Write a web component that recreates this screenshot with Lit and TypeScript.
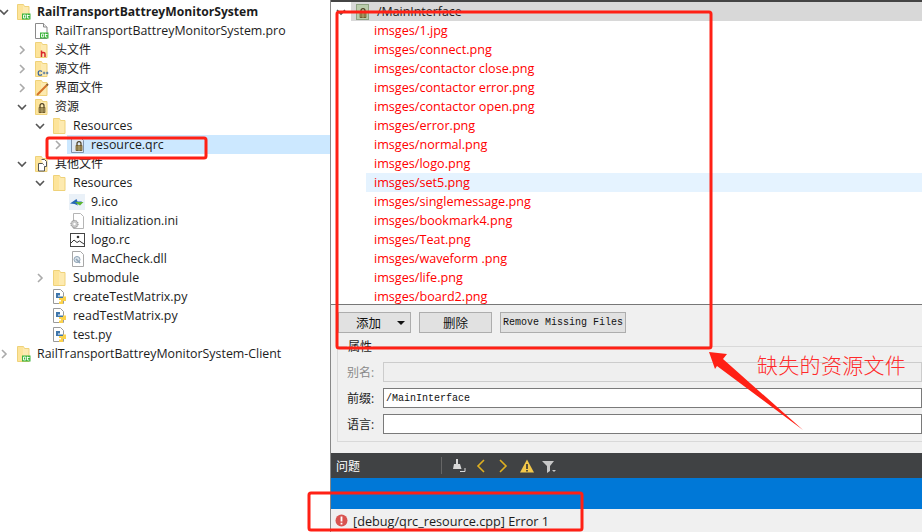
import { LitElement, html, css, svg } from "lit";
import { customElement } from "lit/decorators.js";

type Row = { d: number; c?: "o" | "c"; i: string; t: string; b?: boolean; s?: boolean };

const folderBase = svg`<path d="M.5.5h6l1 2h4.500v13H.5z" fill="#fdeab0" stroke="#efd27a"/><path d="M1 1h5v14H1z" fill="#fde49a"/>`;
const pageBase = svg`<path d="M.5.5h8l3.500 3.500v11.500H.5z" fill="#fff" stroke="#8a8a8a"/><path d="M8.500.5v3.500h3.500" fill="#eee" stroke="#8a8a8a"/>`;
const qtBadge = svg`<rect x="5" y="9.500" width="8.500" height="6" fill="#3cb43c"/><path d="M6.500 11h2.200v3H6.500zM10.500 10.600v3.400h1.800M9.800 11.500h2.800" fill="none" stroke="#fff" stroke-width=".9"/>`;
const lock = svg`<path d="M5 8V6.600a2 2 0 0 1 4 0V8" fill="none" stroke="#4a3c20" stroke-width="1.200"/><rect x="3.600" y="8" width="6.800" height="6" rx=".8" fill="#6f5a2c"/><path d="M3.600 10h6.800M3.600 12h6.800M7 8v6" stroke="#d9c98f" stroke-width=".6"/>`;

const icons: Record<string, unknown> = {
  qt: svg`${folderBase}${qtBadge}`,
  pro: svg`${pageBase}${qtBadge}`,
  h: svg`${folderBase}<path d="M6.500 8.500v6.500M6.500 11.500q.5-1 2-1t1.500 1.500V15" fill="none" stroke="#d8262c" stroke-width="1.500"/>`,
  cpp: svg`${folderBase}<path d="M7 10.500q-.8-.8-2-.8-1.800 0-1.800 2.300t1.800 2.300q1.200 0 2-.8" fill="none" stroke="#2d5f9e" stroke-width="1.100"/><path d="M7.800 12h2.600M9.100 10.700v2.600M11 12h2.400M12.200 10.700v2.600" stroke="#2d5f9e" stroke-width=".8"/>`,
  ui: svg`${folderBase}<path d="M2 15l9.500-9.500" stroke="#d4722a" stroke-width="2"/><path d="M11.500 5.500l1.500-1.500" stroke="#8a5a2a" stroke-width="2"/>`,
  res: svg`${folderBase}${lock}`,
  other: svg`${folderBase}<path d="M3.500 7.500h4l2 2v5.500h-6z" fill="#fff" stroke="#555"/><path d="M6.500 3.500h3l2 2v5h-2" fill="#fff" stroke="#555"/>`,
  folder: svg`${folderBase}`,
  qrc: svg`<path d="M.5.5h9l3 3v12H.5z" fill="#dfe8f2" stroke="#7f93ab"/><g transform="translate(1 0)">${lock}</g>`,
  ico: svg`<rect x="-2" width="16" height="16" fill="#eaf1f8"/><path d="M-1 9.500l6.500-4.500 1 2.500h4.500l-2 2h-3l1 2-3.500-1.500z" fill="#2467b5"/><path d="M4 8h8.500l-3.500 3.500-2-1.200z" fill="#5cb531"/>`,
  ini: svg`<path d="M2.500.5h7l3 3v12h-10z" fill="#fff" stroke="#b5b5b5"/><circle cx="3.500" cy="11" r="3.600" fill="#c9c9c9" stroke="#888" stroke-dasharray="1.400 .8"/><circle cx="3.500" cy="11" r="1.200" fill="#fff"/>`,
  img: svg`<rect x="-.5" y="1.500" width="14" height="13" fill="#fff" stroke="#444"/><path d="M0 11l3-3 3 2.500 2.500-1.500 4.500 3" fill="none" stroke="#333"/><circle cx="7" cy="5" r="1.300" fill="#333"/>`,
  dll: svg`<path d="M1.500.5h8l3 3v12h-11z" fill="#fff" stroke="#a8a8a8"/><circle cx="6" cy="8.500" r="3" fill="#dbe4ec" stroke="#8fa3b5"/><path d="M5 8l4 4" stroke="#8fa3b5" stroke-width="1.600"/>`,
  py: svg`<path d="M.5.5h7l3 3v11H.5z" fill="#fff" stroke="#9a9a9a"/><path d="M3 4h4v2.500H5v1h5v3H7V9H3z" fill="#3f76ab"/><path d="M10 7.500h3V12h-3v3H6v-2.500h2V11H6V9h4z" fill="#fbd24c"/>`,
};

const tree: Row[] = [
  { d: 0, c: "o", i: "qt", t: "RailTransportBattreyMonitorSystem", b: true },
  { d: 1, i: "pro", t: "RailTransportBattreyMonitorSystem.pro" },
  { d: 1, c: "c", i: "h", t: "头文件" },
  { d: 1, c: "c", i: "cpp", t: "源文件" },
  { d: 1, c: "c", i: "ui", t: "界面文件" },
  { d: 1, c: "o", i: "res", t: "资源" },
  { d: 2, c: "o", i: "folder", t: "Resources" },
  { d: 3, c: "c", i: "qrc", t: "resource.qrc", s: true },
  { d: 1, c: "o", i: "other", t: "其他文件" },
  { d: 2, c: "o", i: "folder", t: "Resources" },
  { d: 3, i: "ico", t: "9.ico" },
  { d: 3, i: "ini", t: "Initialization.ini" },
  { d: 3, i: "img", t: "logo.rc" },
  { d: 3, i: "dll", t: "MacCheck.dll" },
  { d: 2, c: "c", i: "folder", t: "Submodule" },
  { d: 2, i: "py", t: "createTestMatrix.py" },
  { d: 2, i: "py", t: "readTestMatrix.py" },
  { d: 2, i: "py", t: "test.py" },
  { d: 0, c: "c", i: "qt", t: "RailTransportBattreyMonitorSystem-Client" },
];

const files = [
  "1.jpg", "connect.png", "contactor close.png", "contactor error.png", "contactor open.png",
  "error.png", "normal.png", "logo.png", "set5.png", "singlemessage.png", "bookmark4.png",
  "Teat.png", "waveform .png", "life.png", "board2.png",
];

const chevron = (c?: "o" | "c") =>
  c === "o"
    ? html`<svg class="chev" viewBox="0 0 10 10"><path d="M1 3l4 4 4-4" fill="none" stroke="#555" stroke-width="1.600"/></svg>`
    : c === "c"
    ? html`<svg class="chev" viewBox="0 0 10 10"><path d="M3 1l4 4-4 4" fill="none" stroke="#aaa" stroke-width="1.600"/></svg>`
    : html`<span class="chev"></span>`;

@customElement("app-root")
export class AppRoot extends LitElement {
  static styles = css`
    :host {
      display: flex;
      position: relative;
      width: 922px;
      height: 532px;
      overflow: hidden;
      background: #fff;
      font-family: "Open Sans", "Noto Sans CJK SC", sans-serif;
      font-size: 12.38px;
      color: #1c1c1c;
    }
    .tree {
      width: 330px;
      flex: none;
      padding-top: 2px;
      overflow: hidden;
      box-sizing: border-box;
    }
    .row {
      display: flex;
      align-items: center;
      height: 19px;
    }
    .chev-box {
      width: 18px;
      flex: none;
      display: flex;
      justify-content: center;
    }
    .chev {
      width: 10px;
      height: 10px;
      display: block;
    }
    .content {
      flex: 1;
      display: flex;
      align-items: center;
      height: 19px;
      gap: 6px;
      white-space: nowrap;
    }
    .content.sel {
      background: #cce8ff;
    }
    .ic-box {
      width: 18px;
      flex: none;
      box-sizing: border-box;
      padding-left: 4px;
    }
    .ic {
      width: 14px;
      height: 16px;
      display: block;
      overflow: visible;
    }
    .bold {
      font-weight: 700;
      font-size: 12.15px;
    }
    .cjk {
      font-size: 12px;
      position: relative;
      top: -1px;
    }
    .right {
      flex: 1;
      min-width: 0;
      display: flex;
      flex-direction: column;
      border-left: 1px solid #888;
      background: #f0f0f0;
    }
    .topstrip {
      height: 2px;
      background: #444;
      flex: none;
    }
    .list {
      height: 302px;
      flex: none;
      background: #fff;
      overflow: hidden;
      border-bottom: 1px solid #777;
    }
    .hdr {
      display: flex;
      align-items: center;
      height: 19px;
    }
    .hdr .chev-box {
      width: 20px;
    }
    .hdr .body {
      flex: 1;
      height: 19px;
      background: #d8d8d8;
      display: flex;
      align-items: center;
      gap: 7px;
      padding-left: 5px;
    }
    .file {
      height: 19px;
      line-height: 19px;
      margin-left: 35px;
      padding-left: 8px;
      color: #ff0000;
      white-space: nowrap;
      font-size: 12.62px;
    }
    .file.hot {
      background: #e5f3ff;
    }
    .toolbar {
      display: flex;
      gap: 8px;
      padding: 7px 0 0 7px;
      height: 21px;
      flex: none;
    }
    .btn {
      height: 21px;
      box-sizing: border-box;
      border: 1px solid #adadad;
      background: #e1e1e1;
      display: flex;
      align-items: center;
      justify-content: center;
      width: 73px;
      font-size: 12.5px;
      color: #111;
    }
    .btn.menu {
      justify-content: flex-start;
      padding-left: 17px;
      gap: 16px;
    }
    .caret {
      width: 0;
      height: 0;
      border-left: 4px solid transparent;
      border-right: 4px solid transparent;
      border-top: 4px solid #111;
    }
    .btn.mono {
      width: 126px;
      font-family: "Liberation Mono", monospace;
      font-size: 10px;
    }
    .group {
      margin: 13px 0 0 6px;
      height: 96px;
      box-sizing: border-box;
      border: 1px solid #d9d9d9;
      border-right: none;
      position: relative;
      padding-top: 15px;
      display: flex;
      flex-direction: column;
      gap: 6px;
    }
    .legend {
      position: absolute;
      top: -7px;
      left: 9px;
      padding: 0 1px;
      background: #f0f0f0;
      font-size: 12px;
      line-height: 14px;
    }
    .field {
      display: flex;
      align-items: center;
      height: 20px;
      padding-left: 9px;
      font-size: 12px;
    }
    .field.off {
      color: #8a8a8a;
    }
    .field label {
      width: 36px;
      flex: none;
    }
    .inp {
      flex: 1;
      height: 20px;
      box-sizing: border-box;
      border: 1px solid #7a7a7a;
      background: #fff;
      font-family: "Liberation Mono", monospace;
      font-size: 10px;
      line-height: 20px;
      padding-left: 2px;
      color: #111;
    }
    .field.off .inp {
      background: #efefef;
      border-color: #ccc;
    }
    .spacer {
      flex: 1;
    }
    .bar {
      height: 25px;
      flex: none;
      background: #404244;
      display: flex;
      align-items: center;
      color: #fff;
      font-size: 12px;
      padding-left: 5px;
    }
    .bar .title {
      width: 105px;
    }
    .bar .div {
      width: 1px;
      height: 17px;
      background: #666;
      margin-right: 9px;
    }
    .bar svg {
      display: block;
      width: 16px;
      height: 16px;
      flex: none;
      margin-right: 6px;
    }
    .bar svg.warn {
      margin-left: 2px;
    }
    .blue {
      height: 31px;
      flex: none;
      background: #0078d7;
    }
    .err {
      height: 23px;
      flex: none;
      background: #f0f0f0;
      display: flex;
      align-items: center;
      gap: 5px;
      padding-left: 4px;
      font-size: 12.7px;
    }
    .err svg {
      width: 13px;
      height: 13px;
      flex: none;
    }
    .overlay {
      position: absolute;
      inset: 0;
      width: 922px;
      height: 532px;
      pointer-events: none;
    }
    .note {
      position: absolute;
      left: 757px;
      top: 351px;
      font-size: 21px;
      letter-spacing: 0.3px;
      line-height: 29px;
      color: #ff2a2a;
      font-weight: 300;
      white-space: nowrap;
    }
  `;

  render() {
    return html`
      <div class="tree">
        ${tree.map(
          (r) => html`<div class="row" style="margin-left:${18 * r.d - 5}px">
            <span class="chev-box">${chevron(r.c)}</span>
            <div class="content ${r.s ? "sel" : ""}">
              <span class="ic-box"><svg class="ic" viewBox="0 0 14 16">${icons[r.i]}</svg></span>
              <span class="${r.b ? "bold" : /[^\x00-\x7f]/.test(r.t) ? "cjk" : ""}">${r.t}</span>
            </div>
          </div>`
        )}
      </div>
      <div class="right">
        <div class="topstrip"></div>
        <div class="list">
          <div class="hdr">
            <span class="chev-box">${chevron("o")}</span>
            <div class="body">
              <svg class="ic" viewBox="0 0 14 16"><rect x=".5" y=".5" width="12" height="15" fill="#b9ccab" stroke="#8fa382"/>${lock}</svg>
              <span>/MainInterface</span>
            </div>
          </div>
          ${files.map((f) => html`<div class="file ${f === "set5.png" ? "hot" : ""}">imsges/${f}</div>`)}
        </div>
        <div class="toolbar">
          <div class="btn menu">添加<span class="caret"></span></div>
          <div class="btn">删除</div>
          <div class="btn mono">Remove Missing Files</div>
        </div>
        <div class="group">
          <span class="legend">属性</span>
          <div class="field off"><label>别名:</label><div class="inp"></div></div>
          <div class="field"><label>前缀:</label><div class="inp">/MainInterface</div></div>
          <div class="field"><label>语言:</label><div class="inp"></div></div>
        </div>
        <div class="spacer"></div>
        <div class="bar">
          <span class="title">问题</span>
          <span class="div"></span>
          <svg viewBox="0 0 16 16"><path d="M5 1h2v5h2l1.500 5H2l1-5h2z" fill="#d8d8d8"/><path d="M9 13.500h5V10" fill="none" stroke="#d8d8d8"/></svg>
          <svg viewBox="0 0 16 16"><path d="M11 2L5 8l6 6" fill="none" stroke="#e0b020" stroke-width="1.600"/></svg>
          <svg viewBox="0 0 16 16"><path d="M5 2l6 6-6 6" fill="none" stroke="#e0b020" stroke-width="1.600"/></svg>
          <svg class="warn" viewBox="0 0 16 16"><path d="M8 1.500l7 13H1z" fill="#f4c84a"/><path d="M8 6v5M8 12v1.400" stroke="#333" stroke-width="1.600"/></svg>
          <svg viewBox="0 0 16 16"><path d="M1 3h12L9 8v5L6 15V8z" fill="#c8c8c8"/><path d="M11 12h4l-2 2z" fill="#c8c8c8"/></svg>
        </div>
        <div class="blue"></div>
        <div class="err">
          <svg viewBox="0 0 13 13"><circle cx="6.500" cy="6.500" r="6" fill="#d9534f"/><path d="M6.500 2.500v5M6.500 8.800v1.700" stroke="#fff" stroke-width="1.800"/></svg>
          <span>[debug/qrc_resource.cpp] Error 1</span>
        </div>
      </div>
      <svg class="overlay" viewBox="0 0 922 532">
        <g fill="none" stroke="#ff2015" stroke-width="3">
          <rect x="47" y="138" width="159" height="20" rx="2"/>
          <rect x="337" y="12" width="374" height="336" rx="2"/>
          <rect x="309" y="493" width="273" height="37" rx="2"/>
        </g>
        <path d="M709 352L727 354L723 359L803 430L717 366L715 369Z" fill="#ff2015"/>
      </svg>
      <div class="note">缺失的资源文件</div>
    `;
  }
}
